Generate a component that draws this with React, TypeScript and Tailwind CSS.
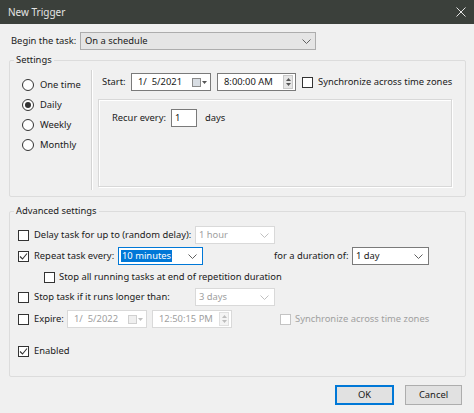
import React from "react";

const Chevron = ({ color = "#606060" }: { color?: string }) => (
  <svg width="9" height="5" viewBox="0 0 9 5" fill="none">
    <path d="M0.5 0.5 L4.5 4.5 L8.5 0.5" stroke={color} strokeWidth="1" />
  </svg>
);

const Checkbox = ({ checked = false, disabled = false }: { checked?: boolean; disabled?: boolean }) => (
  <span
    className={`w-[11px] h-[11px] shrink-0 border bg-white flex items-center justify-center ${
      disabled ? "border-[#c4c4c4]" : "border-[#333333]"
    }`}
  >
    {checked && (
      <svg width="9" height="9" viewBox="0 0 9 9" fill="none">
        <path d="M1 4.5 L3.5 7 L8 1.5" stroke="#333333" strokeWidth="1.1" />
      </svg>
    )}
  </span>
);

const Radio = ({ checked = false }: { checked?: boolean }) => (
  <span className="w-[12px] h-[12px] shrink-0 rounded-full border border-[#333333] bg-white flex items-center justify-center">
    {checked && <span className="w-[6px] h-[6px] rounded-full bg-[#333333]" />}
  </span>
);

const Combo = ({
  value,
  disabled = false,
  className = "",
}: {
  value: string;
  disabled?: boolean;
  className?: string;
}) => (
  <div
    className={`h-[18px] shrink-0 border bg-white flex items-center justify-between pl-[3px] pr-[5px] ${
      disabled ? "border-[#d9d9d9] text-[#a0a0a0]" : "border-[#7a7a7a]"
    } ${className}`}
  >
    <span>{value}</span>
    <Chevron color={disabled ? "#c0c0c0" : "#606060"} />
  </div>
);

const DateBox = ({ value, disabled = false, className = "" }: { value: string; disabled?: boolean; className?: string }) => (
  <div
    className={`h-[18px] shrink-0 border bg-white flex items-center justify-between pl-[6px] pr-[3px] ${
      disabled ? "border-[#d9d9d9] text-[#a0a0a0]" : "border-[#7a7a7a]"
    } ${className}`}
  >
    <span className="whitespace-pre">{value}</span>
    <span className="flex items-center gap-[1px]">
      <span className={`w-[9px] h-[9px] border ${disabled ? "border-[#d0d0d0] bg-[#efefef]" : "border-[#8a8a8a] bg-[#d8dde3]"}`} />
      <svg width="5" height="3" viewBox="0 0 5 3">
        <path d="M0 0 L5 0 L2.5 3 Z" fill={disabled ? "#c0c0c0" : "#555"} />
      </svg>
    </span>
  </div>
);

const TimeBox = ({ value, disabled = false, className = "" }: { value: string; disabled?: boolean; className?: string }) => (
  <div
    className={`h-[18px] shrink-0 border bg-white flex items-center justify-between pl-[6px] pr-[2px] ${
      disabled ? "border-[#d9d9d9] text-[#a0a0a0]" : "border-[#7a7a7a]"
    } ${className}`}
  >
    <span>{value}</span>
    <span
      className={`w-[10px] h-[14px] flex flex-col items-center justify-center gap-[2px] border ${
        disabled ? "border-[#e0e0e0] bg-[#f4f4f4]" : "border-[#c8c8c8] bg-[#e6e6e6]"
      }`}
    >
      <svg width="5" height="3" viewBox="0 0 5 3">
        <path d="M0 3 L5 3 L2.5 0 Z" fill={disabled ? "#bdbdbd" : "#555"} />
      </svg>
      <svg width="5" height="3" viewBox="0 0 5 3">
        <path d="M0 0 L5 0 L2.5 3 Z" fill={disabled ? "#bdbdbd" : "#555"} />
      </svg>
    </span>
  </div>
);

export default function App() {
  return (
    <div className="w-[474px] h-[413px] bg-[#f0f0f0] flex flex-col text-[9.4px] leading-[12px] text-[#1a1a1a] whitespace-nowrap font-['Noto_Sans',sans-serif] overflow-hidden">
      {/* Title bar */}
      <div className="h-[24px] shrink-0 bg-[#3b403b] flex items-center justify-between pl-[8px] pr-[8px] text-[#e4e4e4] text-[10px]">
        <span>New Trigger</span>
        <svg width="10" height="10" viewBox="0 0 10 10" fill="none">
          <path d="M0.5 0.5 L9.5 9.5 M9.5 0.5 L0.5 9.5" stroke="#e4e4e4" strokeWidth="1" />
        </svg>
      </div>

      {/* Begin the task */}
      <div className="mt-[8px] h-[18px] flex items-center pl-[11px]">
        <span className="w-[69px] shrink-0">Begin the task:</span>
        <div className="w-[236px] h-[18px] shrink-0 bg-[#e5e5e5] border border-[#adadad] flex items-center justify-between pl-[4px] pr-[4px]">
          <span>On a schedule</span>
          <Chevron />
        </div>
      </div>

      {/* Settings */}
      <fieldset className="mt-[4px] ml-[9px] w-[457px] border border-[#dcdcdc] rounded-[2px] min-w-0">
        <legend className="ml-[4px] px-[2px] leading-[12px]">Settings</legend>
        <div className="flex h-[130px]">
          <div className="w-[81px] shrink-0 pt-[9px] pl-[12px] flex flex-col">
            {[
              ["One time", false],
              ["Daily", true],
              ["Weekly", false],
              ["Monthly", false],
            ].map(([label, checked]) => (
              <div key={label as string} className="h-[20px] flex items-center gap-[6px]">
                <Radio checked={checked as boolean} />
                <span>{label as string}</span>
              </div>
            ))}
          </div>
          <div className="mt-[4px] mb-[6px] w-[2px] shrink-0 bg-[#d4d4d4] border-r border-white" />
          <div className="flex-1 mt-[4px] flex flex-col">
            <div className="mt-[3px] h-[18px] flex items-center pl-[9px]">
              <span className="w-[29px] shrink-0">Start:</span>
              <DateBox value="1/  5/2021" className="w-[80px]" />
              <TimeBox value="8:00:00 AM" className="w-[79px] ml-[6px]" />
              <span className="ml-[6px]">
                <Checkbox />
              </span>
              <span className="ml-[5px]">Synchronize across time zones</span>
            </div>
            <div className="mt-[8px] ml-[5px] w-[354px] h-[88px] border border-[#d8d8d8] shadow-[inset_1px_1px_0_#ffffff,1px_1px_0_#ffffff]">
              <div className="mt-[9px] h-[18px] flex items-center pl-[13px]">
                <span className="w-[59px] shrink-0">Recur every:</span>
                <div className="w-[26px] h-[18px] shrink-0 border border-[#7a7a7a] bg-white pl-[3px] flex items-center">1</div>
                <span className="ml-[8px]">days</span>
              </div>
            </div>
          </div>
        </div>
      </fieldset>

      {/* Advanced settings */}
      <fieldset className="mt-[8px] ml-[9px] w-[457px] border border-[#dcdcdc] rounded-[2px] min-w-0">
        <legend className="ml-[4px] px-[2px] leading-[12px]">Advanced settings</legend>
        <div className="flex flex-col pl-[8px] pb-[15px]">
          <div className="mt-[8px] h-[20px] flex items-center">
            <Checkbox />
            <span className="ml-[5px] w-[161px] shrink-0">Delay task for up to (random delay):</span>
            <Combo value="1 hour" disabled className="w-[80px]" />
          </div>
          <div className="mt-[1px] h-[20px] flex items-center">
            <Checkbox checked />
            <span className="ml-[5px] w-[84px] shrink-0">Repeat task every:</span>
            <div className="w-[85px] h-[18px] shrink-0 border border-[#0078d7] bg-white flex items-center justify-between pl-[2px] pr-[5px]">
              <span className="bg-[#0078d7] text-white px-[1px]">10 minutes</span>
              <Chevron />
            </div>
            <span className="ml-[71px] w-[78px] shrink-0">for a duration of:</span>
            <Combo value="1 day" className="w-[77px]" />
          </div>
          <div className="mt-[1px] h-[20px] flex items-center pl-[26px]">
            <Checkbox />
            <span className="ml-[4px]">Stop all running tasks at end of repetition duration</span>
          </div>
          <div className="h-[20px] flex items-center">
            <Checkbox />
            <span className="ml-[5px] w-[161px] shrink-0">Stop task if it runs longer than:</span>
            <Combo value="3 days" disabled className="w-[80px]" />
          </div>
          <div className="mt-[2px] h-[20px] flex items-center">
            <Checkbox />
            <span className="ml-[5px] w-[33px] shrink-0">Expire:</span>
            <DateBox value="1/  5/2022" disabled className="w-[80px]" />
            <TimeBox value="12:50:15 PM" disabled className="w-[80px] ml-[5px]" />
            <span className="ml-[48px]">
              <Checkbox disabled />
            </span>
            <span className="ml-[4px] text-[#a0a0a0]">Synchronize across time zones</span>
          </div>
          <div className="mt-[12px] h-[20px] flex items-center">
            <Checkbox checked />
            <span className="ml-[5px]">Enabled</span>
          </div>
        </div>
      </fieldset>

      {/* Buttons */}
      <div className="mt-[8px] flex justify-end pr-[12px] gap-[11px]">
        <button className="w-[59px] h-[20px] bg-[#e1e1e1] border border-[#0078d7] shadow-[inset_0_0_0_1px_#0078d7]">OK</button>
        <button className="w-[57px] h-[20px] bg-[#e1e1e1] border border-[#adadad]">Cancel</button>
      </div>
    </div>
  );
}
